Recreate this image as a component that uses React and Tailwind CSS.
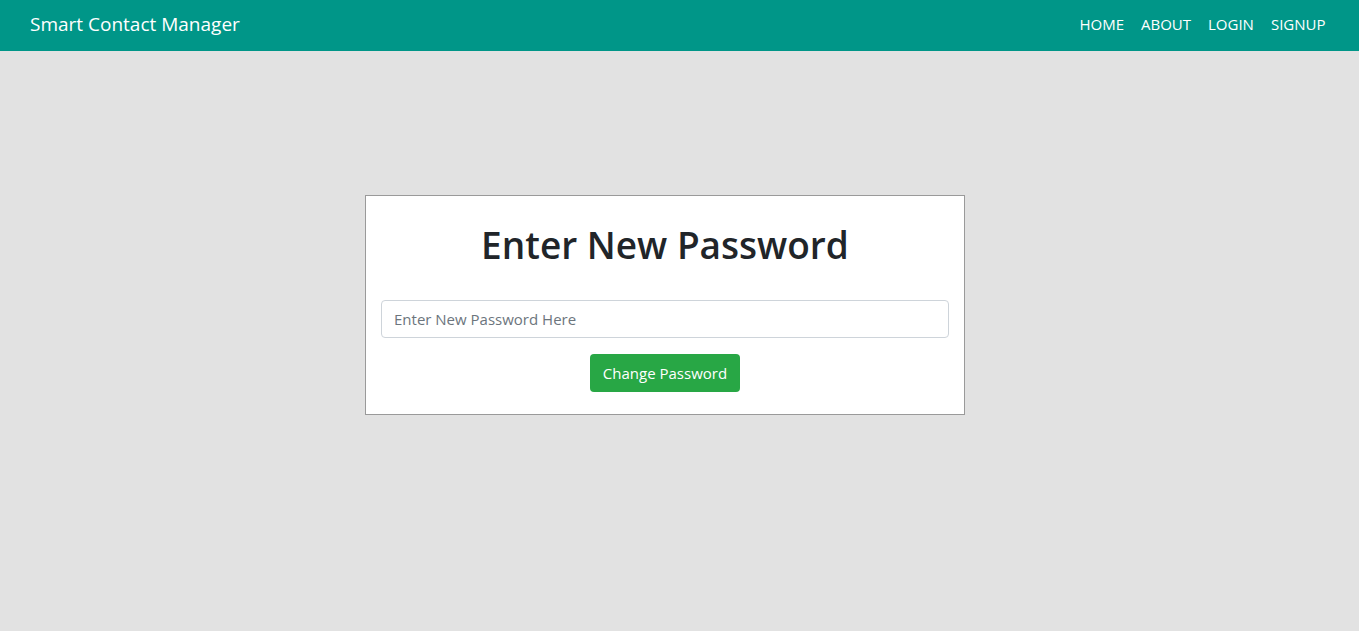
export default function App() {
  const font = { fontFamily: '"Open Sans", "Noto Sans", sans-serif' };
  return (
    <div className="min-h-[631px] bg-[#e2e2e2]" style={font}>
      <nav className="h-[51px] bg-[#009688] flex items-center justify-between pl-[30px] pr-[25px]">
        <span className="text-white text-[19px] leading-none pb-[2px]">Smart Contact Manager</span>
        <ul className="flex items-center text-white text-[15px] pb-[3px]">
          <li className="px-[8.5px]">HOME</li>
          <li className="px-[8.5px]">ABOUT</li>
          <li className="px-[8.5px]">LOGIN</li>
          <li className="px-[8.5px]">SIGNUP</li>
        </ul>
      </nav>
      <div className="pt-[144px]">
        <div className="ml-[365px] w-[600px] h-[220px] bg-white border border-[#9a9a9a] px-[15px] pt-[27px]">
          <h1 className="text-center text-[37px] font-semibold text-[#212529] leading-[1.2]">Enter New Password</h1>
          <input
            className="mt-[33px] block w-full h-[38px] border border-[#ced4da] rounded-[4px] px-3 text-[15px] text-[#495057] placeholder:text-[#6c757d] outline-none"
            placeholder="Enter New Password Here"
          />
          <div className="flex justify-center mt-4">
            <button className="h-[38px] px-[13px] rounded-[4px] bg-[#28a745] text-white text-[15px]">Change Password</button>
          </div>
        </div>
      </div>
    </div>
  );
}
